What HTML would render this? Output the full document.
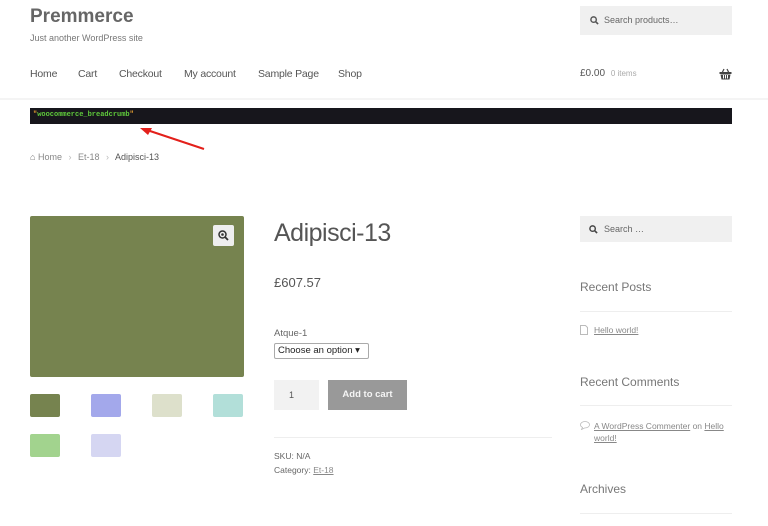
<!DOCTYPE html>
<html><head><style>
body{margin:0;width:768px;height:526px;background:#fff;font-family:"Liberation Sans",sans-serif;color:#6d6d6d;position:relative;overflow:hidden}
.a{position:absolute;white-space:nowrap}
u{text-decoration:underline}
.n{position:absolute;top:68px;font-size:10.5px;color:#555;letter-spacing:-0.2px}
</style></head><body>
<div class="a" style="left:30px;top:6px;font-size:19px;font-weight:bold;color:#666">Premmerce</div>
<div class="a" style="left:30px;top:33px;font-size:9px;color:#777">Just another WordPress site</div>
<div class="a" style="left:580px;top:6px;width:152px;height:29px;background:#f0f0f0"></div>
<svg class="a" style="left:590px;top:16px" width="9" height="9" viewBox="0 0 10 10"><circle cx="4" cy="4" r="3" fill="none" stroke="#555" stroke-width="1.6"/><path d="M6.3 6.3L9 9" stroke="#555" stroke-width="1.8"/></svg>
<div class="a" style="left:604px;top:15px;font-size:9px;color:#666">Search products…</div>
<div class="n" style="left:30px">Home</div>
<div class="n" style="left:78px">Cart</div>
<div class="n" style="left:119px">Checkout</div>
<div class="n" style="left:184px">My account</div>
<div class="n" style="left:258px">Sample Page</div>
<div class="n" style="left:338px">Shop</div>
<div class="a" style="left:580px;top:68px;font-size:10px;color:#555">£0.00 <span style="font-size:8px;color:#aaa;margin-left:3px">0 items</span></div>
<svg class="a" style="left:719px;top:68px" width="13" height="12" viewBox="0 0 13 12"><path d="M3 5L5 1M10 5L8 1" stroke="#444" stroke-width="1.2"/><rect x="0.5" y="4" width="12" height="2" fill="#444"/><path d="M1.5 6.5h10l-1 5h-8z" fill="#444"/><path d="M4.5 7v3.5M6.5 7v3.5M8.5 7v3.5" stroke="#fff"/></svg>
<div class="a" style="left:0;top:98px;width:768px;height:2px;background:#f4f4f4"></div>
<div class="a" style="left:30px;top:108px;width:702px;height:16px;background:#17161c"></div>
<div class="a" style="left:33px;top:111px;font-family:'Liberation Mono',monospace;font-size:7px;font-weight:bold;color:#5fc93b"><span style="color:#e8a030">"</span>woocommerce_breadcrumb<span style="color:#e8a030">"</span></div>
<svg class="a" style="left:138px;top:124px" width="70" height="28"><path d="M66 25L6 5" stroke="#e3201b" stroke-width="2"/><path d="M2 4L14 4L10 11z" fill="#e3201b"/></svg>
<div class="a" style="left:30px;top:152px;font-size:9px;color:#888"><span style="color:#777">&#8962;</span> Home <span style="color:#bbb;margin:0 4px">›</span> Et-18 <span style="color:#bbb;margin:0 4px">›</span> <span style="color:#555">Adipisci-13</span></div>
<div class="a" style="left:30px;top:216px;width:214px;height:161px;background:#76834f;border-radius:2px"></div>
<div class="a" style="left:213px;top:225px;width:21px;height:21px;background:#eee;border-radius:2px"></div>
<svg class="a" style="left:218px;top:230px" width="11" height="11" viewBox="0 0 11 11"><circle cx="4.5" cy="4.5" r="3.5" fill="none" stroke="#333" stroke-width="1.5"/><circle cx="4.5" cy="4.5" r="1.3" fill="#333"/><path d="M7 7L10 10" stroke="#333" stroke-width="1.8"/></svg>
<div class="a" style="left:30px;top:394px;width:30px;height:23px;background:#76834f;border-radius:2px"></div>
<div class="a" style="left:91px;top:394px;width:30px;height:23px;background:#a3a8eb;border-radius:2px"></div>
<div class="a" style="left:152px;top:394px;width:30px;height:23px;background:#dde0cb;border-radius:2px"></div>
<div class="a" style="left:213px;top:394px;width:30px;height:23px;background:#b2dfd9;border-radius:2px"></div>
<div class="a" style="left:30px;top:434px;width:30px;height:23px;background:#a2d38e;border-radius:2px"></div>
<div class="a" style="left:91px;top:434px;width:30px;height:23px;background:#d5d6f2;border-radius:2px"></div>
<div class="a" style="left:274px;top:219px;font-size:25px;color:#555;letter-spacing:-0.5px">Adipisci-13</div>
<div class="a" style="left:274px;top:275px;font-size:13px;color:#555">£607.57</div>
<div class="a" style="left:274px;top:328px;font-size:9.5px;color:#666">Atque-1</div>
<div class="a" style="left:274px;top:343px;width:90px;height:14px;border:1px solid #aaa;border-radius:2px;font-size:9.5px;color:#222;line-height:14px;padding-left:3px">Choose an option ▾</div>
<div class="a" style="left:274px;top:380px;width:45px;height:30px;background:#f2f2f2;font-size:9px;color:#555;line-height:30px;text-indent:15px">1</div>
<div class="a" style="left:328px;top:380px;width:79px;height:30px;background:#999;font-size:9.5px;font-weight:bold;color:#f5f5f5;line-height:30px;text-align:center">Add to cart</div>
<div class="a" style="left:274px;top:437px;width:278px;height:1px;background:#eee"></div>
<div class="a" style="left:274px;top:451px;font-size:8.5px;color:#666">SKU: N/A</div>
<div class="a" style="left:274px;top:465px;font-size:8.5px;color:#666">Category: <u style="color:#888">Et-18</u></div>
<div class="a" style="left:580px;top:216px;width:152px;height:26px;background:#f0f0f0"></div>
<svg class="a" style="left:589px;top:225px" width="9" height="9" viewBox="0 0 10 10"><circle cx="4" cy="4" r="3" fill="none" stroke="#444" stroke-width="1.6"/><path d="M6.3 6.3L9 9" stroke="#444" stroke-width="1.8"/></svg>
<div class="a" style="left:604px;top:224px;font-size:9px;color:#666">Search …</div>
<div class="a" style="left:580px;top:280px;font-size:12px;color:#777">Recent Posts</div>
<div class="a" style="left:580px;top:311px;width:152px;height:1px;background:#eee"></div>
<svg class="a" style="left:580px;top:325px" width="8" height="10"><path d="M0.5 0.5h5l2 2v7h-7z" fill="none" stroke="#bbb"/></svg>
<div class="a" style="left:594px;top:325px;font-size:8.5px;color:#888"><u>Hello world!</u></div>
<div class="a" style="left:580px;top:375px;font-size:12px;color:#777">Recent Comments</div>
<div class="a" style="left:580px;top:405px;width:152px;height:1px;background:#eee"></div>
<svg class="a" style="left:580px;top:421px" width="10" height="9"><path d="M5 0.5C2.5 0.5 0.5 2 0.5 3.8c0 1.2 0.8 2.1 2 2.6L1.5 8.5 4.5 7C7.5 7 9.5 5.6 9.5 3.8 9.5 2 7.5 0.5 5 0.5z" fill="none" stroke="#bbb" stroke-width="0.8"/></svg>
<div class="a" style="left:594px;top:420px;font-size:8.5px;color:#888;line-height:12px"><u>A WordPress Commenter</u> on <u>Hello</u><br><u>world!</u></div>
<div class="a" style="left:580px;top:482px;font-size:12px;color:#777">Archives</div>
<div class="a" style="left:580px;top:513px;width:152px;height:1px;background:#eee"></div>
</body></html>
